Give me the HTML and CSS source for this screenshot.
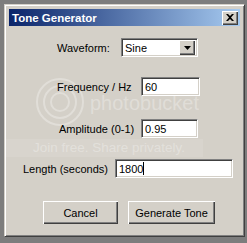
FILE: index.html
```html
<!DOCTYPE html>
<html lang="en">
<head>
    <meta charset="UTF-8">
    <title>Tone Generator</title>
    <link rel="stylesheet" href="styles.css">
</head>
<body>
    <div class="window">
        <div class="titlebar">
            <span class="title">Tone Generator</span>
            <span class="close">
                <svg width="8" height="7" viewBox="0 0 8 7"><path d="M0 0h2l2 2 2-2h2L5 3.5 8 7H6L4 5 2 7H0l3-3.5z" fill="#000"/></svg>
            </span>
        </div>
        <div class="form">
            <div class="row row-wave">
                <span class="label lbl-wave">Waveform:</span>
                <div class="combo">
                    <span class="combo-text">Sine</span>
                    <span class="arrow"><svg width="7" height="4" viewBox="0 0 7 4"><path d="M0 0h7L3.5 4z" fill="#000"/></svg></span>
                </div>
            </div>
            <div class="row row-freq">
                <span class="label lbl-freq">Frequency / Hz</span>
                <div class="field f-freq">60</div>
            </div>
            <div class="row row-amp">
                <span class="label lbl-amp">Amplitude (0-1)</span>
                <div class="field f-amp">0.95</div>
            </div>
            <div class="row row-len">
                <span class="label lbl-len">Length (seconds)</span>
                <div class="field f-len">1800<span class="caret"></span></div>
            </div>
            <div class="buttons">
                <button class="btn btn-cancel">Cancel</button>
                <button class="btn btn-go">Generate Tone</button>
            </div>
        </div>
        <!-- image host watermark -->
        <svg class="mark-rings" width="50" height="50" viewBox="0 0 50 50">
            <circle cx="25" cy="25" r="23" fill="none" stroke="rgba(255,255,255,0.3)" stroke-width="2"/>
            <circle cx="25" cy="25" r="16" fill="none" stroke="rgba(255,255,255,0.3)" stroke-width="2"/>
            <circle cx="25" cy="25" r="9" fill="none" stroke="rgba(255,255,255,0.3)" stroke-width="2"/>
        </svg>
        <div class="mark-logo">photobucket</div>
        <div class="mark-band">Join free. Share privately.</div>
    </div>
</body>
</html>
```

FILE: styles.css
```css
body {
    margin: 0;
    background: #7d7d7d;
    font-family: "Liberation Sans", Arial, sans-serif;
    font-size: 11px;
    color: #000;
}

.window {
    position: relative;
    margin: 4px 0 0 4px;
    width: 241px;
    height: 233px;
    box-sizing: border-box;
    background: #d4d0c8;
    padding: 4px 4px;
    border-top: 1px solid #d4d0c8;
    border-left: 1px solid #d4d0c8;
    border-right: 1px solid #404040;
    border-bottom: 1px solid #404040;
    box-shadow: inset 1px 1px #fff, inset -1px -1px #808080;
    overflow: hidden;
}

.titlebar {
    height: 17px;
    display: flex;
    align-items: center;
    justify-content: space-between;
    padding: 0 2px 0 3px;
    background: linear-gradient(90deg, #0a246a, #a6caf0);
}
.title {
    color: #fff;
    font-weight: bold;
    font-size: 11.5px;
}
.close {
    width: 16px;
    height: 14px;
    box-sizing: border-box;
    background: #d4d0c8;
    display: flex;
    align-items: center;
    justify-content: center;
    box-shadow: inset 1px 1px #fff, inset -1px -1px #404040, inset -2px -2px #808080;
}

.form {
    position: relative;
    z-index: 1;
    display: flex;
    flex-direction: column;
}
.row {
    display: flex;
    align-items: center;
    height: 19px;
}
.row-wave { margin-top: 12px; padding-left: 48px; }
.row-freq { margin-top: 20px; padding-left: 48px; }
.row-amp  { margin-top: 23px; padding-left: 50px; }
.row-len  { margin-top: 21px; padding-left: 14px; }

.lbl-wave { width: 64px; }
.lbl-freq { width: 84px; }
.lbl-amp  { width: 82px; }
.lbl-len  { width: 92px; }

.field, .combo {
    height: 19px;
    box-sizing: border-box;
    background: #fff;
    border-top: 1px solid #808080;
    border-left: 1px solid #808080;
    border-right: 1px solid #fff;
    border-bottom: 1px solid #fff;
    box-shadow: inset 1px 1px #404040, inset -1px -1px #d4d0c8;
    display: flex;
    align-items: center;
    padding-left: 3px;
}
.f-freq { width: 59px; }
.f-amp  { width: 57px; }
.f-len  { width: 118px; }
.caret {
    display: inline-block;
    width: 1px;
    height: 13px;
    background: #000;
}

.combo {
    width: 77px;
    justify-content: space-between;
    padding-right: 2px;
}
.arrow {
    width: 16px;
    height: 15px;
    box-sizing: border-box;
    background: #d4d0c8;
    display: flex;
    align-items: center;
    justify-content: center;
    box-shadow: inset 1px 1px #fff, inset -1px -1px #404040, inset -2px -2px #808080;
}

.buttons {
    display: flex;
    gap: 10px;
    margin-top: 23px;
    padding-left: 34px;
}
.btn {
    height: 23px;
    border: none;
    background: #d4d0c8;
    font-family: "Liberation Sans", Arial, sans-serif;
    font-size: 11px;
    color: #000;
    padding: 0;
    box-shadow: inset 1px 1px #fff, inset -1px -1px #404040, inset -2px -2px #808080;
}
.btn-cancel { width: 75px; }
.btn-go { width: 87px; }

.mark-rings {
    position: absolute;
    left: 30px;
    top: 72px;
}
.mark-logo {
    position: absolute;
    left: 85px;
    top: 91px;
    height: 15px;
    line-height: 15px;
    font-size: 20px;
    color: rgba(255, 255, 255, 0.3);
}
.mark-band {
    position: absolute;
    left: 0;
    top: 134px;
    width: 198px;
    height: 18px;
    line-height: 18px;
    padding-left: 28px;
    box-sizing: border-box;
    font-size: 13.5px;
    color: rgba(255, 255, 255, 0.3);
    background: rgba(255, 255, 255, 0.1);
}
```
